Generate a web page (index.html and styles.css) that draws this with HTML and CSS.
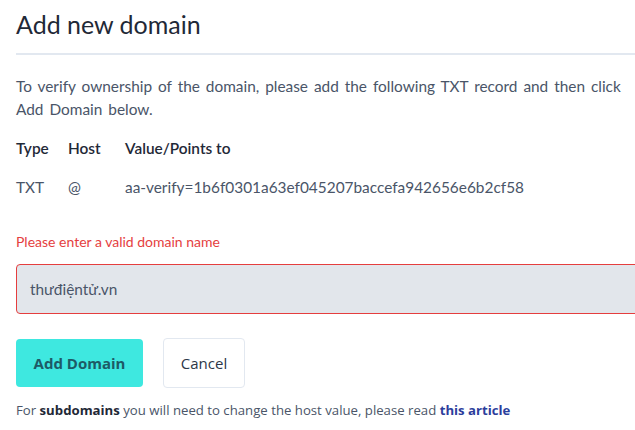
FILE: index.html
```html
<!DOCTYPE html>
<html>
<head>
<meta charset="utf-8">
<link rel="stylesheet" href="styles.css">
</head>
<body>
<div class="page">
  <h1 class="title">Add new domain</h1>
  <p class="intro">To verify ownership of the domain, please add the following TXT record and then click Add Domain below.</p>
  <div class="records">
    <span class="th">Type</span><span class="th">Host</span><span class="th">Value/Points to</span>
    <span class="td">TXT</span><span class="td">@</span><span class="td">aa-verify=1b6f0301a63ef045207baccefa942656e6b2cf58</span>
  </div>
  <div class="error">Please enter a valid domain name</div>
  <div class="input">thưđiệntử.vn</div>
  <div class="actions">
    <button class="btn primary">Add Domain</button>
    <button class="btn secondary">Cancel</button>
  </div>
  <p class="note">For <b>subdomains</b> you will need to change the host value, please read <a class="link">this article</a></p>
</div>
</body>
</html>
```
FILE: styles.css
```css
html, body { margin: 0; padding: 0; background: #fff; overflow: hidden; }
body { font-family: Lato, "Open Sans", sans-serif; color: #374151; }
.page { padding: 0 0 0 16px; width: 660px; }
.title { margin: 0; padding-top: 8px; height: 45px; font-size: 25px; font-weight: 400; color: #1f2937; line-height: 32px; border-bottom: 2px solid #e2e8f0; box-sizing: content-box; }
.intro { margin: 20px 0 0; font-size: 15.4px; line-height: 23px; color: #4a5568; width: 612px; word-spacing: 2px; }
.records { display: grid; grid-template-columns: 52px 57px auto; row-gap: 23px; margin-top: 19px; font-size: 15.4px; line-height: 16px; }
.th { color: #1f2937; font-weight: 600; }
.td { color: #4a5568; }
.error { margin-top: 39px; font-size: 14px; color: #e53e3e; line-height: 16px; }
.input { margin-top: 14px; height: 48px; border: 1px solid #e53e3e; border-radius: 4px; background: #e2e6eb; padding-left: 13px; display: flex; align-items: center; font-size: 15.4px; color: #4a5568; }
.actions { display: flex; gap: 20px; margin-top: 24px; align-items: center; }
.btn { font-family: "Open Sans", sans-serif; border-radius: 4px; font-size: 15px; height: 48px; cursor: pointer; padding: 0; }
.primary { background: #3ee8e0; border: none; color: #1d5a66; font-weight: 700; width: 127px; }
.secondary { background: #fff; border: 1px solid #e2e8f0; color: #2d3748; width: 82px; height: 50px; }
.note { margin: 13px 0 0; font-family: "Open Sans", sans-serif; font-size: 13.2px; color: #4a5568; line-height: 18px; }
.note b { color: #1f2937; }
.link { color: #2c3e9c; font-weight: 700; }
```
